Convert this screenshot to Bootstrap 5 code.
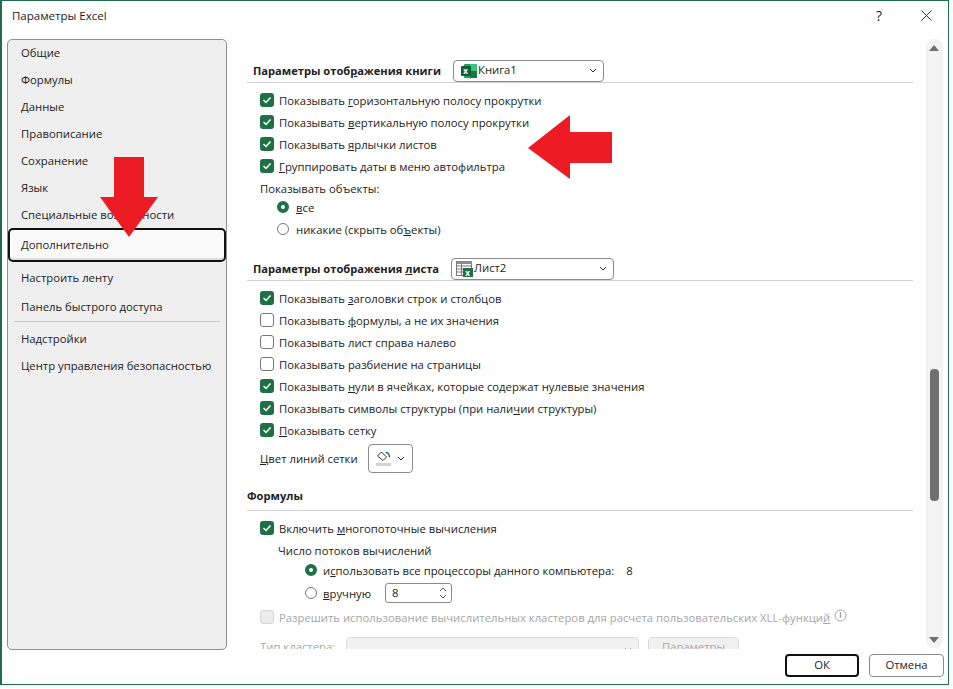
<!DOCTYPE html>
<html lang="ru"><head><meta charset="utf-8"><title>Параметры Excel</title>
<link href="https://cdn.jsdelivr.net/npm/bootstrap@5.3.0/dist/css/bootstrap.min.css" rel="stylesheet">
<style>
html,body{height:689px;background:#fff;overflow:hidden}
body{font-family:"Open Sans","Noto Sans","Liberation Sans",sans-serif;font-size:11.3px;color:#222;position:relative}
.xl-win{width:949px;height:685px;border:solid #1f6e4c;border-width:1px 1px 1px 2px;position:relative}
.xl-title{height:38px;padding:0 0 9px 10px;font-size:11.5px}
.xl-title .q{margin-left:auto;width:18px;text-align:center;font-size:14px;margin-right:33px}
.xl-title svg{margin-right:16px}
.xl-body{height:611px}
.xl-side{width:220px;margin-left:5px;background:#efefef;border:1px solid #8f8f8f;border-radius:5px;height:611px;flex:none;padding-top:0}
.xl-side .it{height:27px;padding-left:13px;display:flex;align-items:center}
.xl-side .sel{height:34px;width:218px;margin-top:-1px;background:#fafafa;border:2px solid #111;border-radius:5px;padding-left:11px;box-shadow:inset 0 -2px 0 #ddd}
.xl-side .gap2{margin-top:2px}.xl-side .gap3{margin-top:3px}.xl-side .gap4{margin-top:4px}
.xl-side hr{margin:0 6px;border-color:#c8c8c8;opacity:1}
.xl-main{flex:1;position:relative;overflow:hidden;height:610px;padding:20px 0 0 20px}
.xl-sec{font-weight:700;font-size:11.15px;height:24px;display:flex;align-items:center;border-bottom:1px solid #d2d2d2;margin-right:35px}
.xl-sec .ti{width:206px;padding:2px 0 0 6px;white-space:nowrap}
.xl-sec .ti.flush{padding-left:0}
.xl-sec.second{margin-top:17px}
.xl-sec.third{height:38px;padding-top:7px}
.xl-sel{height:22px;border:1px solid #8a8a8a;border-radius:4px;display:flex;align-items:center;font-weight:400;font-size:11.3px;padding:0 6px;gap:1px}
.xl-sel.book{width:151px}
.xl-sel.sheet{width:163px;margin-left:-2px;padding-left:4px}
.xl-sel .car,.xl-spin .car{margin-left:auto}
.xl-list{padding-top:6px}
.xl-row{height:22px;display:flex;align-items:center;white-space:nowrap}
.xl-row>span:not(.xl-cb):not(.xl-ra){padding-top:2px}
.i1{padding-left:13px}.i2{padding-left:31px}.i3{padding-left:30px}.i4{padding-left:58px}
.up3{margin-top:-3px}.up2{margin-top:-2px}.dn1{margin-top:1px}.dn2{margin-top:2px}
.xl-cb{width:14px;height:14px;border-radius:3px;background:#1e7145;flex:none;margin-right:5px;display:flex;align-items:center;justify-content:center}
.xl-cb.off{background:#fff;border:1px solid #777}
.xl-cb.dis{background:#ececec;border:1px solid #d5d5d5}
.xl-ra{width:12px;height:12px;border-radius:50%;border:1px solid #777;flex:none;margin-right:7px}
.xl-ra.on{border:4px solid #1e7145;background:#fff}
.i4 .xl-ra{margin-right:6px}
.xl-gridrow{height:30px;margin-top:2px}
.xl-col{width:45px;height:29px;border:1px solid #8a8a8a;border-radius:4px;margin-left:10px;display:flex;align-items:center;justify-content:center;gap:5px}
.xl-num{margin-left:12px}
.xl-spin{width:67px;height:20px;border:1px solid #8a8a8a;border-radius:3px;margin-left:14px;display:flex;align-items:center;padding:0 4px 0 6px}
.xl-mut{color:#a6a6a6}
.xl-info{margin-left:4px;margin-bottom:3px}
.xl-clu{height:24px;margin-top:9px}
.xl-clu .lb{width:86px;margin-top:-6px}
.xl-dsel{height:24px;background:#f1f1f1;border:1px solid #dcdcdc;border-radius:4px;width:293px;display:flex;align-items:center;justify-content:flex-end;padding-right:6px}
.xl-dbtn{height:24px;width:91px;background:#f1f1f1;border:1px solid #dcdcdc;border-radius:4px;margin-left:9px;display:flex;align-items:center;justify-content:center;padding-bottom:4px}
.xl-sb{position:absolute;right:5px;top:0;width:17px;height:609px;background:#f3f3f3;border-radius:8px}
.xl-thumb{position:absolute;left:4px;top:330px;width:9px;height:132px;background:#707070;border-radius:4px}
.xl-up,.xl-dn{position:absolute;left:3px;width:0;height:0;border-left:5px solid transparent;border-right:5px solid transparent}
.xl-up{top:6px;border-bottom:6px solid #6e6e6e}.xl-dn{top:598px;border-top:6px solid #6e6e6e}
.xl-foot{height:34px;justify-content:flex-end;padding:4px 4px 0 0;gap:10px;position:relative}
.xl-btn{width:75px;height:23px;background:#fff;border:1px solid #8a8a8a;border-radius:4px;display:flex;align-items:center;justify-content:center}
.xl-btn.def{width:74px;border:2px solid #111}
.xl-arrow{position:absolute;left:0;top:0;pointer-events:none}
</style></head><body>
<svg width="0" height="0" class="position-absolute"><symbol id="ck" viewBox="0 0 10 8"><path d="M1.5 4l2.5 2.5 4.5-5" fill="none" stroke="#fff" stroke-width="1.5"/></symbol><symbol id="car" viewBox="0 0 8 5"><path d="M1 1l3 3 3-3" fill="none" stroke="#333"/></symbol></svg>
<div class="xl-win">
 <div class="xl-title d-flex align-items-center"><span>Параметры Excel</span><span class="q">?</span>
  <svg width="11" height="11" viewBox="0 0 11 11"><path d="M.5.5l10 10M10.5.5l-10 10" stroke="#333" fill="none"/></svg></div>
 <div class="xl-body d-flex">
  <div class="xl-side">
   <div class="it">Общие</div><div class="it">Формулы</div><div class="it">Данные</div><div class="it">Правописание</div><div class="it">Сохранение</div><div class="it">Язык</div><div class="it">Специальные возможности</div>
   <div class="it sel">Дополнительно</div>
   <div class="it gap3">Настроить ленту</div>
   <div class="it gap2">Панель быстрого доступа</div><hr>
   <div class="it gap4">Надстройки</div><div class="it">Центр управления безопасностью</div>
  </div>
  <div class="xl-main">
   <div class="xl-sec"><span class="ti">Параметры отоб<u>р</u>ажения книги</span>
    <div class="xl-sel book"><svg width="17" height="16" viewBox="0 0 17 16"><rect x="4" y="1" width="13" height="14" rx="1" fill="#21a366"/><rect x="10" y="1" width="7" height="7" fill="#33c481"/><rect x="10" y="8" width="7" height="7" fill="#107c41"/><rect x="1" y="3" width="10" height="10" rx="1" fill="#185c37"/><text x="3.3" y="11" font-size="8" font-weight="700" fill="#fff">x</text></svg><span>Книга1</span><svg class="car" width="8" height="5"><use href="#car"/></svg></div></div>
   <div class="xl-list">
   <div class="xl-row i1"><span class="xl-cb"><svg width="10" height="8"><use href="#ck"/></svg></span><span>Показывать <u>г</u>оризонтальную полосу прокрутки</span></div>
   <div class="xl-row i1"><span class="xl-cb"><svg width="10" height="8"><use href="#ck"/></svg></span><span>Показывать <u>в</u>ертикальную полосу прокрутки</span></div>
   <div class="xl-row i1"><span class="xl-cb"><svg width="10" height="8"><use href="#ck"/></svg></span><span>Показывать <u>я</u>рлычки листов</span></div>
   <div class="xl-row i1"><span class="xl-cb"><svg width="10" height="8"><use href="#ck"/></svg></span><span><u>Г</u>руппировать даты в меню автофильтра</span></div>
   <div class="xl-row i1"><span>Показывать объекты:</span></div>
   <div class="xl-row i3 up3"><span class="xl-ra on"></span><span><u>в</u>се</span></div>
   <div class="xl-row i3"><span class="xl-ra"></span><span>никакие (скрыть об<u>ъ</u>екты)</span></div>
   </div>
   <div class="xl-sec second"><span class="ti">Параметры отображения <u>л</u>иста</span>
    <div class="xl-sel sheet"><svg width="17" height="18" viewBox="0 0 17 18"><rect x=".5" y="1.5" width="15" height="14" fill="#fff" stroke="#777"/><path d="M1 6h15M1 9h15M1 12h15M5.500 2v14" stroke="#777"/><rect x="1" y="1" width="15" height="3" fill="#8c8c8c"/><rect x="7" y="8" width="10" height="9" fill="#1e7145"/><text x="9.300" y="15.500" font-size="8" font-weight="700" fill="#fff">x</text></svg><span>Лист2</span><svg class="car" width="8" height="5"><use href="#car"/></svg></div></div>
   <div class="xl-list">
   <div class="xl-row i1"><span class="xl-cb"><svg width="10" height="8"><use href="#ck"/></svg></span><span>Показывать <u>з</u>аголовки строк и столбцов</span></div>
   <div class="xl-row i1"><span class="xl-cb off"></span><span>Показывать <u>ф</u>ормулы, а не их значения</span></div>
   <div class="xl-row i1"><span class="xl-cb off"></span><span>Показывать лист справа налево</span></div>
   <div class="xl-row i1"><span class="xl-cb off"></span><span>Показывать разбиение на страницы</span></div>
   <div class="xl-row i1"><span class="xl-cb"><svg width="10" height="8"><use href="#ck"/></svg></span><span>Показывать <u>н</u>ули в ячейках, которые содержат нулевые значения</span></div>
   <div class="xl-row i1"><span class="xl-cb"><svg width="10" height="8"><use href="#ck"/></svg></span><span>Показывать символы структуры (при нали<u>ч</u>ии структуры)</span></div>
   <div class="xl-row i1"><span class="xl-cb"><svg width="10" height="8"><use href="#ck"/></svg></span><span><u>П</u>оказывать сетку</span></div>
   <div class="xl-row i1 xl-gridrow"><span><u>Ц</u>вет линий сетки</span>
    <div class="xl-col"><svg width="17" height="17" viewBox="0 0 17 17"><path d="M6.500 2l5 5-3.500 3.500-5.500-4.500z" fill="#fff" stroke="#333"/><path d="M10.500 2.500c2.500 0 4 1.500 4 5" fill="none" stroke="#2b6ca3" stroke-width="1.500"/><rect x="1" y="13" width="15" height="3" fill="#d4d4d4"/></svg><svg width="8" height="5"><use href="#car"/></svg></div></div>
   </div>
   <div class="xl-sec third"><span class="ti flush">Формулы</span></div>
   <div class="xl-list">
   <div class="xl-row i1"><span class="xl-cb"><svg width="10" height="8"><use href="#ck"/></svg></span><span>Включить <u>м</u>ногопоточные вычисления</span></div>
   <div class="xl-row i2"><span>Число потоков вычислений</span></div>
   <div class="xl-row i4 up2"><span class="xl-ra on"></span><span>и<u>с</u>пользовать все процессоры данного компьютера:</span><span class="xl-num">8</span></div>
   <div class="xl-row i4 dn1"><span class="xl-ra"></span><span><u>в</u>ручную</span><div class="xl-spin"><span>8</span><svg class="car" width="8" height="14" viewBox="0 0 8 14"><path d="M1 5l3-3 3 3M1 9l3 3 3-3" fill="none" stroke="#555"/></svg></div></div>
   <div class="xl-row i1 xl-mut dn2"><span class="xl-cb dis"></span><span>Разрешить использование вычислительных кластеров для расчета пользовательских XLL-функци<u>й</u></span><svg class="xl-info" width="13" height="13" viewBox="0 0 13 13"><circle cx="6.500" cy="6.500" r="5.500" fill="none" stroke="#a6a6a6"/><rect x="5.800" y="3" width="1.400" height="6" fill="#a6a6a6"/></svg></div>
   <div class="xl-row i1 xl-mut xl-clu"><span class="lb">Тип кластера:</span><div class="xl-dsel"><svg width="8" height="5" viewBox="0 0 8 5"><path d="M1 1l3 3 3-3" fill="none" stroke="#a6a6a6"/></svg></div><div class="xl-dbtn">Параметры</div></div>
   </div>
   <div class="xl-sb"><span class="xl-up"></span><span class="xl-thumb"></span><span class="xl-dn"></span></div>
  </div>
 </div>
 <div class="xl-foot d-flex"><div class="xl-btn def">ОК</div><div class="xl-btn">Отмена</div></div>
</div>
<svg class="xl-arrow" width="953" height="689" viewBox="0 0 953 689"><path d="M114 157h30v40h14l-29 40-29-40h14z" fill="#ed1c24"/><path d="M612 132v31h-42v16l-42-31 42-33v17z" fill="#ed1c24"/></svg>
</body></html>
